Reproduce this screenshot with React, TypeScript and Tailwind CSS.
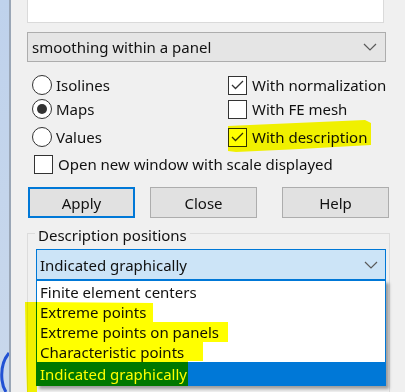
const font = { fontFamily: '"Noto Sans", "Open Sans", sans-serif' };

function Chevron() {
  return (
    <svg width="14" height="8" viewBox="0 0 14 8" className="shrink-0">
      <path d="M1 1 L7 7 L13 1" fill="none" stroke="#5a5a5a" strokeWidth="1.2" />
    </svg>
  );
}

function Radio({ label, checked }: { label: string; checked?: boolean }) {
  return (
    <div className="flex items-center gap-[4px]">
      <div className="flex h-[20px] w-[20px] items-center justify-center rounded-full border border-[#333333] bg-white">
        {checked && <div className="h-[10px] w-[10px] rounded-full bg-[#333333]" />}
      </div>
      <span>{label}</span>
    </div>
  );
}

function Check({ label, checked }: { label: string; checked?: boolean }) {
  return (
    <div className="flex items-center gap-[5px]">
      <div className="flex h-[19px] w-[19px] items-center justify-center border border-[#333333] bg-white">
        {checked && (
          <svg width="13" height="10" viewBox="0 0 13 10">
            <path d="M1 5 L4.5 8.5 L12 1" fill="none" stroke="#333333" strokeWidth="1.3" />
          </svg>
        )}
      </div>
      <span>{label}</span>
    </div>
  );
}

const options = [
  "Finite element centers",
  "Extreme points",
  "Extreme points on panels",
  "Characteristic points",
  "Indicated graphically",
];

export default function App() {
  return (
    <div className="relative flex h-[392px] w-[405px] overflow-hidden bg-[#f0f0f0] text-[15px] leading-[20px] text-[#111111]" style={font}>
      {/* edge of the window behind */}
      <div className="relative w-[9px] shrink-0 bg-gradient-to-b from-[#bfd2ec] to-[#c9d8ec]">
        <svg width="9" height="40" viewBox="0 0 9 40" className="absolute left-0 top-[352px]">
          <path d="M9 1 C3 8 1 18 2 28 C2.5 33 4 37 6 40" fill="none" stroke="#2252d4" strokeWidth="3" />
        </svg>
      </div>
      <div className="w-[2px] shrink-0 bg-[#9aa6b6]" />

      <div className="flex flex-1 flex-col pl-[16px] [&>*]:shrink-0">
        <div className="h-[23px] w-[357px] border border-t-0 border-[#dadada] bg-white" />

        <div className="mt-[9px] flex h-[30px] w-[359px] items-center justify-between border border-[#adadad] bg-[#e5e5e5] pl-[4px] pr-[8px]">
          <span>smoothing within a panel</span>
          <Chevron />
        </div>

        <div className="mt-[11px] grid grid-cols-[196px_1fr] grid-rows-[24px_24px_32px] items-center pl-[5px]">
          <Radio label="Isolines" />
          <Check label="With normalization" checked />
          <Radio label="Maps" checked />
          <Check label="With FE mesh" />
          <Radio label="Values" />
          <Check label="With description" checked />
        </div>

        <div className="mt-[1px] pl-[7px]">
          <Check label="Open new window with scale displayed" />
        </div>

        <div className="ml-[1px] mt-[13px] flex">
          <button className="h-[31px] w-[107px] border-2 border-[#0078d7] bg-[#e1e1e1]">Apply</button>
          <button className="ml-[15px] h-[31px] w-[107px] border border-[#adadad] bg-[#e1e1e1]">Close</button>
          <button className="ml-[25px] h-[31px] w-[107px] border border-[#adadad] bg-[#e1e1e1]">Help</button>
        </div>

        <div className="relative mt-[15px] h-[170px] w-[363px] border border-[#dcdcdc] px-[8px] pt-[15px]">
          <span className="absolute -top-[9px] left-[7px] bg-[#f0f0f0] px-[3px]">Description positions</span>
          <div className="relative">
            <div className="flex h-[31px] w-[350px] items-center justify-between border border-[#0078d7] bg-[#cce4f7] pl-[3px] pr-[7px]">
              <span>Indicated graphically</span>
              <Chevron />
            </div>
            <div className="absolute left-0 top-[31px] z-10 w-[350px] border border-[#0078d7] bg-white pt-[1px] shadow-[3px_3px_3px_rgba(0,0,0,0.35)]">
              {options.map((o, i) => (
                <div
                  key={o}
                  className={
                    i === options.length - 1
                      ? "flex h-[23px] items-center bg-[#0078d7] pl-[3px] text-white"
                      : "flex h-[20px] items-center pl-[3px]"
                  }
                >
                  {o}
                </div>
              ))}
            </div>
          </div>
        </div>
      </div>

      {/* highlighter marks */}
      <svg width="405" height="392" className="pointer-events-none absolute left-0 top-0 z-20 mix-blend-multiply">
        <g fill="#ffff00">
          <path d="M228 126 L250 125 L365 120 L371 123 L371 145 L300 149 L236 152 L228 151 Z" />
          <path d="M25 302 L37 302 L37 392 L27 392 L26 360 Z" />
          <path d="M36 302 L153 303 L153 322 L228 322 L228 342 L203 342 L203 361 L188 361 L188 386 L36 386 Z" />
        </g>
      </svg>
    </div>
  );
}
